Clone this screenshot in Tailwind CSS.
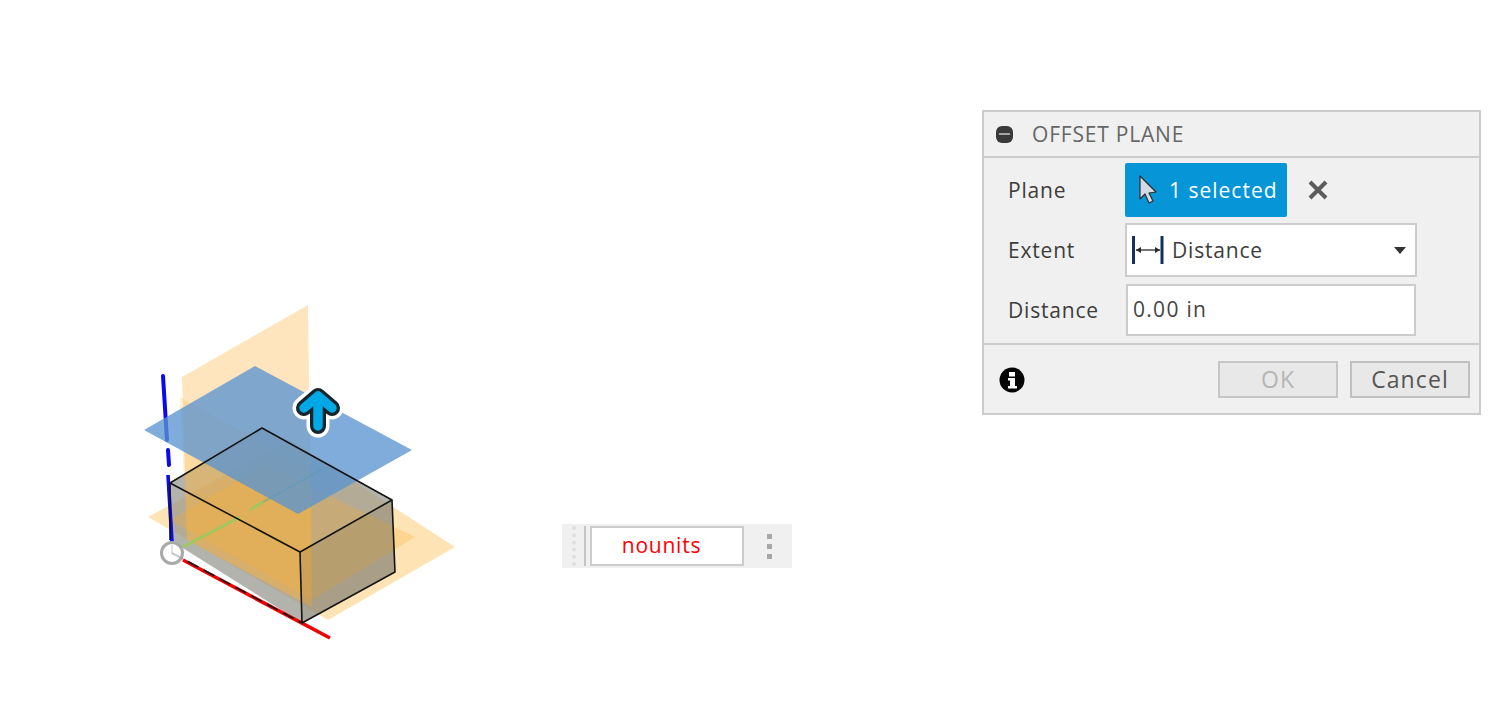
<!DOCTYPE html>
<html>
<head>
<meta charset="utf-8">
<script src="https://cdn.jsdelivr.net/npm/@tailwindcss/browser@4"></script>
</head>
<body class="bg-white">
<div class="relative w-[1494px] h-[712px] overflow-hidden bg-white font-['Open_Sans','Noto_Sans',sans-serif]">

  <!-- 3D viewport drawing -->
  <svg class="absolute left-[130px] top-[290px] blur-[0.6px]" width="340" height="360" viewBox="130 290 340 360" fill="none">
    <!-- horizontal orange plane -->
    <polygon points="148,517 290,440 455,547 328,620" fill="#fdd58c" fill-opacity="0.65"/>
    <!-- grey box body -->
    <polygon points="170,483 262,428 392,500 395,572 302,623 170,540" fill="#8f8f86" fill-opacity="0.68"/>
    <!-- vertical orange plane -->
    <polygon points="182,377 308,305 312,607 187,540" fill="#fdb84a" fill-opacity="0.36"/>
    <!-- orange band -->
    <polygon points="170,520 265,465 415,537 312,600" fill="#f9ad2f" fill-opacity="0.28"/>
    <polygon points="180,397 312,470 312,607 187,540" fill="#f9ad2f" fill-opacity="0.2"/>
    <!-- right face shade -->
    <polygon points="300,552 392,500 395,572 302,623" fill="#7d6a4a" fill-opacity="0.2"/>
    <!-- axes -->
    <path d="M183,547 L240,517" stroke="#a2c75e" stroke-width="3"/>
    <path d="M250,510 L263,502" stroke="#a2c75e" stroke-width="3"/>
    <path d="M263,502 L327,467" stroke="#7fae6b" stroke-width="2" stroke-opacity="0.7"/>
    <path d="M183,560 L330,638" stroke="#f00000" stroke-width="3.6"/>
    <path d="M163,376 L167,440" stroke="#0a0aee" stroke-width="4" stroke-linecap="round"/>
    <path d="M168,450 L169,465" stroke="#0a0aee" stroke-width="4" stroke-linecap="round"/>
    <path d="M168,475 L172,542" stroke="#0a0aee" stroke-width="3.6"/>
    <!-- blue plane -->
    <polygon points="255,366 412,450 298,514 144,430" fill="#5b95d0" fill-opacity="0.78"/>
    <!-- box edges -->
    <g stroke="#141414" stroke-width="1.6" stroke-linejoin="round">
      <path d="M170,483 L262,428 L392,500 L300,552 Z"/>
      <path d="M170,483 L170,540"/>
      <path d="M300,552 L302,623 L395,572 L392,500"/>
      <path d="M172,553 L302,623" stroke-dasharray="12 6"/>
    </g>
    <!-- origin -->
    <circle cx="172" cy="553" r="10.5" fill="#ffffff" fill-opacity="0.75" stroke="#a9a9a9" stroke-width="3"/>
    <path d="M172,545 L172,554 L179,556" stroke="#c4c4c4" stroke-width="1"/>
    <!-- arrow -->
    <g stroke-linecap="round" stroke-linejoin="round">
      <path d="M318,426 L318,398 M304,408 L318,396 L332,408" stroke="#ffffff" stroke-width="23"/>
      <path d="M318,426 L318,398 M304,408 L318,396 L332,408" stroke="#16252c" stroke-width="16"/>
      <path d="M318,426 L318,398 M304,408 L318,396 L332,408" stroke="#00a8e6" stroke-width="9.5"/>
    </g>
  </svg>

  <!-- floating text command bar -->
  <div class="absolute left-[562px] top-[524px] w-[230px] h-[44px] bg-[#f0f0f0] flex items-center">
    <div class="ml-[10px] w-[6px] h-[40px] border-l-4 border-dotted border-[#dedede]"></div>
    <div class="ml-[6px] w-[2px] h-[40px] bg-[#c4c4c4]"></div>
    <div class="ml-[4px] w-[154px] h-[40px] bg-white border-2 border-[#cccccc] flex items-center justify-center pr-[11px] text-[#ff0000] text-[21px] tracking-[0.75px]">nounits</div>
    <div class="ml-[23px] flex flex-col gap-[5px]">
      <span class="block w-[5px] h-[5px] bg-[#a8a8a8]"></span>
      <span class="block w-[5px] h-[5px] bg-[#a8a8a8]"></span>
      <span class="block w-[5px] h-[5px] bg-[#a8a8a8]"></span>
    </div>
  </div>

  <!-- Offset plane dialog -->
  <div class="absolute left-[982px] top-[110px] w-[499px] h-[305px] flex flex-col bg-[#f0f0f0] text-[#3c3c3c] text-[21px] tracking-[0.8px]">
    <div class="h-[48px] border-2 border-[#cccccc] flex items-center pl-[12px]">
      <span class="w-[17px] h-[17px] rounded-[6px] bg-[#3a3a3a] flex items-center justify-center"><span class="block w-[11px] h-[2px] bg-[#a5a5a5]"></span></span>
      <span class="ml-[19px] pt-[1px] text-[#666666] text-[21px] tracking-[0.8px]">OFFSET PLANE</span>
    </div>
    <div class="h-[185px] border-x-2 border-[#cccccc] pt-[5px] flex flex-col">
      <div class="flex items-center h-[54px]">
        <span class="ml-[24px] w-[117px] pt-[1px]">Plane</span>
        <div class="w-[162px] h-[54px] rounded-[2px] bg-[#0696d7] flex items-center text-white">
          <svg class="ml-[13px]" width="20" height="30" viewBox="0 0 20 30"><path d="M2,1 L2,24 L7,19 L11,28 L15,26 L11,18 L18,17 Z" fill="#d4dae4" stroke="#2c2c2c" stroke-width="1.2" stroke-linejoin="round"/></svg>
          <span class="ml-[11px] tracking-[1px] pt-[1px]">1 selected</span>
        </div>
        <svg class="ml-[21px]" width="20" height="20" viewBox="0 0 20 20"><path d="M2,2 L18,18 M18,2 L2,18" stroke="#5c5c5c" stroke-width="4"/></svg>
      </div>
      <div class="flex items-center h-[54px] mt-[6px]">
        <span class="ml-[24px] w-[117px] pt-[1px]">Extent</span>
        <div class="w-[292px] h-[54px] bg-white border-2 border-[#cccccc] flex items-center">
          <svg class="ml-[4px]" width="34" height="32" viewBox="0 0 34 32"><path d="M2.5,2 V30 M31,2 V30" stroke="#12305f" stroke-width="3"/><path d="M5,16 H29" stroke="#2a2a2a" stroke-width="1.3"/><path d="M5,16 L10,13 V19 Z M29,16 L24,13 V19 Z" fill="#2a2a2a"/></svg>
          <span class="ml-[7px] pt-[1px]">Distance</span>
          <svg class="ml-auto mr-[8px]" width="14" height="9" viewBox="0 0 14 9"><path d="M1,1 H13 L7,8 Z" fill="#333333"/></svg>
        </div>
      </div>
      <div class="flex items-center h-[52px] mt-[7px]">
        <span class="ml-[24px] w-[118px] pt-[1px]">Distance</span>
        <div class="w-[290px] h-[52px] bg-white border-2 border-[#cccccc] flex items-center pl-[5px] text-[#444444] tracking-[1.3px]">0.00 in</div>
      </div>
    </div>
    <div class="h-[72px] border-t-2 border-x-2 border-b-2 border-[#cccccc] flex items-center pr-[9px]">
      <svg class="ml-[15px] mt-[1px]" width="26" height="26" viewBox="0 0 26 26"><circle cx="13" cy="13" r="12.5" fill="#050505"/><rect x="10" y="5" width="6" height="4.5" fill="#fff"/><path d="M9,11 H16 V19 H18 V21.5 H9 V19 H11 V13.5 H9 Z" fill="#fff"/></svg>
      <div class="ml-auto w-[120px] h-[37px] bg-[#e8e8e8] border-2 border-[#c6c6c6] flex items-center justify-center text-[#b5b5b5] text-[23px] tracking-[1px]">OK</div>
      <div class="ml-[12px] w-[120px] h-[37px] bg-[#e8e8e8] border-2 border-[#c0c0c0] flex items-center justify-center text-[#555555] text-[23px] tracking-[1.1px]">Cancel</div>
    </div>
  </div>
</div>
</body>
</html>
